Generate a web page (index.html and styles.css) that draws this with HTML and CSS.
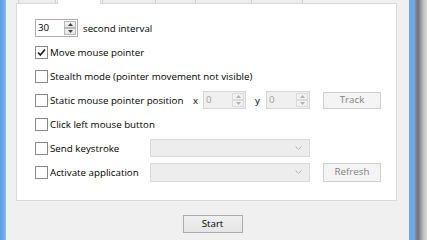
FILE: index.html
```html
<!DOCTYPE html>
<html>
<head>
<meta charset="utf-8">
<link rel="stylesheet" href="styles.css">
</head>
<body>
<div class="window">
  <div class="frame-l"></div>
  <div class="client">
    <div class="tabs">
      <div class="tab-fill w2"></div>
      <div class="tab t1"></div>
      <div class="tab-fill w1"></div>
      <div class="tab sel t2"></div>
      <div class="tab-fill w1"></div>
      <div class="tab t3"></div>
      <div class="tab t4"></div>
      <div class="tab t5"></div>
      <div class="tab t6"></div>
      <div class="tab-fill grow"></div>
    </div>
    <div class="panel">
      <div class="row">
        <div class="spin">
          <span class="spin-val">30</span>
          <span class="spin-btns">
            <span class="sb"><svg width="5" height="3" viewBox="0 0 5 3"><path d="M0 3 L2.5 0 L5 3 Z" class="tri"/></svg></span>
            <span class="sb"><svg width="5" height="3" viewBox="0 0 5 3"><path d="M0 0 L2.5 3 L5 0 Z" class="tri"/></svg></span>
          </span>
        </div>
        <span class="after-spin">second interval</span>
      </div>
      <div class="row">
        <span class="cb"><svg width="11" height="11" viewBox="0 0 11 11"><path d="M2 5.5 L4.3 8 L9 2.5" fill="none" stroke="#1a1a1a" stroke-width="1.6"/></svg></span>
        <span>Move mouse pointer</span>
      </div>
      <div class="row">
        <span class="cb"></span>
        <span>Stealth mode (pointer movement not visible)</span>
      </div>
      <div class="row">
        <div class="lab lab-static"><span class="cb"></span><span>Static mouse pointer position</span></div>
        <span class="axis ax-x">x</span>
        <div class="spin dis">
          <span class="spin-val">0</span>
          <span class="spin-btns">
            <span class="sb"><svg width="5" height="3" viewBox="0 0 5 3"><path d="M0 3 L2.5 0 L5 3 Z" class="tri"/></svg></span>
            <span class="sb"><svg width="5" height="3" viewBox="0 0 5 3"><path d="M0 0 L2.5 3 L5 0 Z" class="tri"/></svg></span>
          </span>
        </div>
        <span class="axis ax-y">y</span>
        <div class="spin dis wide">
          <span class="spin-val">0</span>
          <span class="spin-btns">
            <span class="sb"><svg width="5" height="3" viewBox="0 0 5 3"><path d="M0 3 L2.5 0 L5 3 Z" class="tri"/></svg></span>
            <span class="sb"><svg width="5" height="3" viewBox="0 0 5 3"><path d="M0 0 L2.5 3 L5 0 Z" class="tri"/></svg></span>
          </span>
        </div>
        <button class="btn dis-btn track">Track</button>
      </div>
      <div class="row">
        <span class="cb"></span>
        <span>Click left mouse button</span>
      </div>
      <div class="row">
        <div class="lab lab-combo"><span class="cb"></span><span>Send keystroke</span></div>
        <div class="combo"><svg width="7" height="4" viewBox="0 0 7 4"><path d="M0.5 0.5 L3.5 3.5 L6.5 0.5" fill="none" stroke="#b4b4b4" stroke-width="1"/></svg></div>
      </div>
      <div class="row">
        <div class="lab lab-combo"><span class="cb"></span><span>Activate application</span></div>
        <div class="combo tall"><svg width="7" height="4" viewBox="0 0 7 4"><path d="M0.5 0.5 L3.5 3.5 L6.5 0.5" fill="none" stroke="#b4b4b4" stroke-width="1"/></svg></div>
        <button class="btn dis-btn refresh">Refresh</button>
      </div>
    </div>
    <div class="footer">
      <button class="btn start">Start</button>
    </div>
  </div>
  <div class="frame-r"></div>
</div>
</body>
</html>
```
FILE: styles.css
```css
html, body {
  margin: 0;
  padding: 0;
  overflow: hidden;
}
body {
  font-family: "Open Sans", "Noto Sans", sans-serif;
  font-size: 9.75px;
  color: #000;
}
.window {
  display: flex;
  width: 427px;
  height: 240px;
  background: #f0f0f0;
}
.frame-l {
  width: 6px;
  background: linear-gradient(to right, #5d9be6 0, #6eaaec 4px, #8ebcef 6px);
  flex: none;
}
.client {
  width: 403px;
  flex: none;
  box-sizing: border-box;
  padding-left: 10px;
  display: flex;
  flex-direction: column;
  background: #f0f0f0;
}
.frame-r {
  width: 18px;
  flex: none;
  background: linear-gradient(to right, #6aa8ec 0, #6aa8ec 6px, #8a9099 6px, #6f7277 9px, #9c9c9c 12px, #c8c8c8 15px, #d6d6d6 18px);
}
.tabs {
  display: flex;
  width: 381px;
  height: 4px;
}
.tab-fill {
  height: 4px;
  box-sizing: border-box;
  border-bottom: 1px solid #d9d9d9;
}
.w2 { width: 2px; }
.w1 { width: 1px; }
.grow { flex: 1; }
.tab {
  height: 4px;
  box-sizing: border-box;
  border-left: 1px solid #d0d0d0;
  border-right: 1px solid #d0d0d0;
  border-bottom: 1px solid #d9d9d9;
  background: #ececec;
}
.tab.sel {
  background: #fff;
  border-bottom: none;
  border-color: #d9d9d9;
}
.t1 { width: 38px; }
.t2 { width: 44px; }
.t3 { width: 54px; }
.t4 { width: 40px; border-left: none; }
.t5 { width: 56px; border-left: none; }
.t6 { width: 51px; border-left: none; }
.panel {
  width: 381px;
  height: 197px;
  box-sizing: border-box;
  background: #fff;
  border: 1px solid #d9d9d9;
  border-top: none;
  padding: 12px 0 0 18px;
}
.row {
  display: flex;
  align-items: center;
  height: 24px;
  white-space: nowrap;
}
.cb {
  width: 13px;
  height: 13px;
  box-sizing: border-box;
  border: 1px solid #8a8a8a;
  background: #fff;
  margin-right: 2px;
  flex: none;
  display: flex;
  align-items: center;
  justify-content: center;
}
.cb svg { display: block; }
.lab {
  display: flex;
  align-items: center;
  flex: none;
}
.lab-static { width: 158px; }
.lab-combo { width: 115px; }
.spin {
  width: 43px;
  height: 18px;
  box-sizing: border-box;
  border: 1px solid #abadb3;
  background: #fff;
  display: flex;
  flex: none;
}
.spin.wide { width: 44px; }
.spin-val {
  flex: 1;
  padding-left: 2px;
  line-height: 16px;
}
.spin-btns {
  width: 13px;
  display: flex;
  flex-direction: column;
  padding: 1px 1px 1px 0;
  box-sizing: border-box;
}
.sb {
  flex: 1;
  box-sizing: border-box;
  border: 1px solid #b9b9b9;
  background: linear-gradient(#f4f4f4, #e4e4e4);
  display: flex;
  align-items: center;
  justify-content: center;
}
.sb svg { display: block; }
.tri { fill: #404040; }
.spin.dis {
  border-color: #d5d5d5;
  background: #f0f0f0;
  color: #a0a0a0;
}
.spin.dis .sb {
  border-color: #dadada;
  background: #f2f2f2;
}
.spin.dis .tri { fill: #b0b0b0; }
.after-spin { margin-left: 5px; }
.axis {
  flex: none;
  width: 10px;
}
.ax-y {
  margin-left: 9px;
  width: 11px;
}
.btn {
  font-family: "Open Sans", "Noto Sans", sans-serif;
  font-size: 9.75px;
  box-sizing: border-box;
  padding: 0;
  margin: 0;
  width: 58px;
  height: 18px;
  line-height: 14px;
  border: 1px solid #acacac;
  background: linear-gradient(#f0f0f0, #e5e5e5);
  color: #000;
  flex: none;
}
.dis-btn {
  border-color: #cfcfcf;
  background: #f4f4f4;
  color: #838383;
  margin-left: 13px;
}
.track { height: 17px; }
.refresh { height: 19px; }
.combo {
  width: 160px;
  height: 18px;
  box-sizing: border-box;
  border: 1px solid #d9d9d9;
  background: #ededed;
  display: flex;
  align-items: center;
  justify-content: flex-end;
  padding-right: 7px;
  flex: none;
}
.combo.tall { height: 19px; }
.combo svg { display: block; }
.footer {
  display: flex;
  justify-content: center;
  padding-top: 14px;
}
.start {
  width: 60px;
  height: 18px;
}
```
